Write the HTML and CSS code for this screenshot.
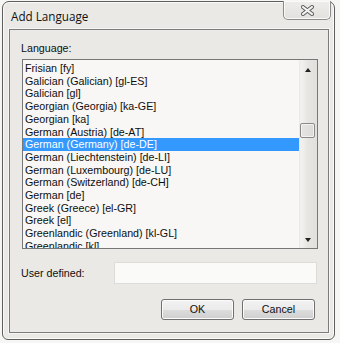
FILE: index.html
```html
<!DOCTYPE html>
<html>
<head>
<meta charset="utf-8">
<link rel="stylesheet" href="styles.css">
</head>
<body>
<div class="window">
  <div class="titlebar">
    <span class="title">Add Language</span>
    <div class="close">
      <svg width="13" height="11" viewBox="0 0 13 11">
        <g stroke="#5a5a5a" stroke-width="4" stroke-linecap="square">
          <line x1="2" y1="2" x2="11" y2="9"/>
          <line x1="11" y1="2" x2="2" y2="9"/>
        </g>
        <g stroke="#f4f4f4" stroke-width="2" stroke-linecap="square">
          <line x1="2" y1="2" x2="11" y2="9"/>
          <line x1="11" y1="2" x2="2" y2="9"/>
        </g>
      </svg>
    </div>
  </div>
  <div class="client">
    <div class="label">Language:</div>
    <div class="listbox">
      <ul class="items">
        <li>Frisian [fy]</li>
        <li>Galician (Galician) [gl-ES]</li>
        <li>Galician [gl]</li>
        <li>Georgian (Georgia) [ka-GE]</li>
        <li>Georgian [ka]</li>
        <li>German (Austria) [de-AT]</li>
        <li class="selected">German (Germany) [de-DE]</li>
        <li>German (Liechtenstein) [de-LI]</li>
        <li>German (Luxembourg) [de-LU]</li>
        <li>German (Switzerland) [de-CH]</li>
        <li>German [de]</li>
        <li>Greek (Greece) [el-GR]</li>
        <li>Greek [el]</li>
        <li>Greenlandic (Greenland) [kl-GL]</li>
        <li>Greenlandic [kl]</li>
      </ul>
      <div class="scrollbar">
        <div class="arrow"><span class="tri-up"></span></div>
        <div class="track"><div class="thumb"></div></div>
        <div class="arrow"><span class="tri-down"></span></div>
      </div>
    </div>
    <div class="user-row">
      <span class="user-label">User defined:</span>
      <div class="input"></div>
    </div>
    <div class="buttons">
      <button class="btn">OK</button>
      <button class="btn">Cancel</button>
    </div>
  </div>
</div>
</body>
</html>
```
FILE: styles.css
```css
html, body {
  margin: 0;
  padding: 0;
}
body {
  width: 340px;
  height: 343px;
  overflow: hidden;
  background: #f6f6f5;
  font-family: "Liberation Sans", Arial, sans-serif;
  color: #0e0e0e;
}
.window {
  margin: 1px 0 0 2px;
  width: 333px;
  height: 339px;
  box-sizing: border-box;
  border: 1px solid #5e5e5e;
  border-radius: 7px 7px 6px 6px;
  background: #ebe9e6;
  box-shadow: inset 0 0 0 1px #fbfbfa;
  display: flex;
  flex-direction: column;
}
.titlebar {
  flex: none;
  height: 27px;
  display: flex;
  justify-content: space-between;
  align-items: flex-start;
}
.title {
  font-family: "Open Sans", "Liberation Sans", sans-serif;
  font-size: 11.7px;
  line-height: 16px;
  margin: 6px 0 0 8px;
  color: #111;
}
.close {
  width: 48px;
  height: 19px;
  margin: -1px 3px 0 0;
  box-sizing: border-box;
  border: 1px solid #8c8c8c;
  border-top: none;
  border-radius: 0 0 5px 5px;
  background: linear-gradient(#efedeb, #e3e1de);
  box-shadow: inset 0 0 0 1px #f9f9f8;
  display: flex;
  align-items: center;
  justify-content: center;
}
.close svg {
  display: block;
}
.client {
  flex: 1;
  margin: 0 5px 6px 6px;
  border: 1px solid #7c7c7c;
  box-shadow: 0 0 0 1px #f7f6f4;
  padding: 12px 10px 12px 11px;
  display: flex;
  flex-direction: column;
  font-size: 10.7px;
}
.label {
  line-height: 13px;
  height: 13px;
  margin-bottom: 4px;
}
.listbox {
  height: 190px;
  box-sizing: border-box;
  margin-left: 1px;
  border: 1px solid #777;
  background: #f8f7f5;
  display: flex;
  overflow: hidden;
}
.items {
  flex: 1;
  list-style: none;
  margin: 0;
  padding: 2px 0 0 0;
  overflow: hidden;
}
.items li {
  padding-left: 2px;
  line-height: 12.7px;
  white-space: nowrap;
}
.items li.selected {
  background: #3399ff;
  color: #fff;
}
.scrollbar {
  width: 18px;
  flex: none;
  display: flex;
  flex-direction: column;
  background: linear-gradient(to right, #e9e7e4 0, #f3f2f0 2px, #e7e5e2 9px, #e2e0dd 18px);
}
.arrow {
  height: 17px;
  flex: none;
  display: flex;
  align-items: center;
  justify-content: center;
}
.tri-up {
  width: 0;
  height: 0;
  border-left: 3px solid transparent;
  border-right: 3px solid transparent;
  border-bottom: 4px solid #222;
  margin-top: 2px;
}
.tri-down {
  width: 0;
  height: 0;
  border-left: 3px solid transparent;
  border-right: 3px solid transparent;
  border-top: 4px solid #222;
}
.track {
  flex: 1;
}
.thumb {
  margin: 46px 0 0 1px;
  width: 15px;
  height: 15px;
  box-sizing: border-box;
  border: 1px solid #8a8a8a;
  border-radius: 2px;
  background: linear-gradient(to right, #e6e5e3, #dcdad7);
  box-shadow: inset 0 0 0 1px #f3f2f0;
}
.user-row {
  margin-top: 13px;
  height: 22px;
  display: flex;
  align-items: center;
}
.user-label {
  line-height: 13px;
}
.input {
  margin-left: auto;
  margin-right: 1px;
  width: 203px;
  height: 22px;
  box-sizing: border-box;
  border: 1px solid #dedcd9;
  background: #fafaf9;
}
.buttons {
  margin-top: 15px;
  display: flex;
  justify-content: flex-end;
  gap: 8px;
  margin-right: 3px;
}
.btn {
  width: 73px;
  height: 21px;
  box-sizing: border-box;
  border: 1px solid #707070;
  border-radius: 3px;
  background: linear-gradient(#f2f2f2 0, #ebebeb 50%, #dddddd 51%, #cfcfcf 100%);
  box-shadow: inset 0 0 0 1px #fbfbfb;
  font-family: "Liberation Sans", Arial, sans-serif;
  font-size: 10.7px;
  color: #0e0e0e;
  padding: 0;
  line-height: 19px;
}
```
